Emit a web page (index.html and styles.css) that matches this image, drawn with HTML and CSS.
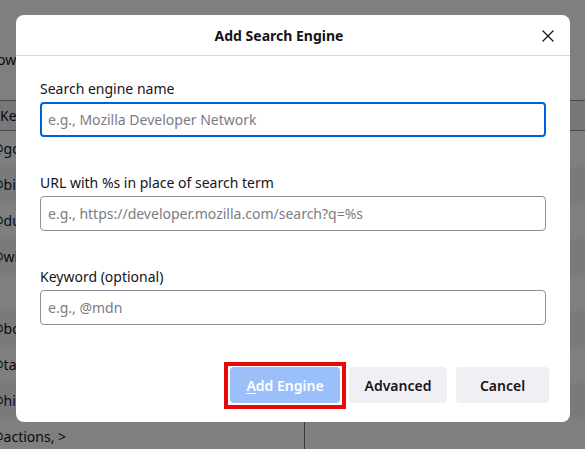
FILE: index.html
```html
<!DOCTYPE html>
<html>
<head>
<meta charset="utf-8">
<link rel="stylesheet" href="styles.css">
</head>
<body>
<div class="page">
  <div class="bg">
    <div class="bg-intro">ow</div>
    <div class="bg-table">
      <div class="bg-row bg-head"><span class="c1">Keyword</span><span class="c2">Name</span></div>
      <div class="bg-row"><span class="c1">@google</span><span class="c2"></span></div>
      <div class="bg-row alt"><span class="c1">@bing</span><span class="c2"></span></div>
      <div class="bg-row"><span class="c1">@duckduckgo</span><span class="c2"></span></div>
      <div class="bg-row alt"><span class="c1">@wikipedia</span><span class="c2"></span></div>
      <div class="bg-row"><span class="c1"></span><span class="c2"></span></div>
      <div class="bg-row alt"><span class="c1">@bookmarks, *</span><span class="c2"></span></div>
      <div class="bg-row"><span class="c1">@tabs, %</span><span class="c2"></span></div>
      <div class="bg-row alt"><span class="c1">@history, ^</span><span class="c2"></span></div>
      <div class="bg-row"><span class="c1">@actions, &gt;</span><span class="c2"></span></div>
    </div>
  </div>
  <div class="overlay"></div>
  <div class="dialog">
    <div class="header">
      <div class="title">Add Search Engine</div>
      <button class="close" aria-label="Close">
        <svg width="12" height="12" viewBox="0 0 12 12"><path d="M0.5 0.5 L11.5 11.5 M11.5 0.5 L0.5 11.5" stroke="#15141a" stroke-width="1.2" fill="none"/></svg>
      </button>
    </div>
    <div class="body">
      <div class="field">
        <label class="label">Search engine name</label>
        <input class="input focused" placeholder="e.g., Mozilla Developer Network">
      </div>
      <div class="field">
        <label class="label">URL with %s in place of search term</label>
        <input class="input" placeholder="e.g., https://developer.mozilla.com/search?q=%s">
      </div>
      <div class="field">
        <label class="label">Keyword (optional)</label>
        <input class="input" placeholder="e.g., @mdn">
      </div>
    </div>
    <div class="footer">
      <span class="ring"><button class="btn primary"><u>A</u>dd Engine</button></span>
      <button class="btn advanced">Advanced</button>
      <button class="btn cancel">Cancel</button>
    </div>
  </div>
</div>
</body>
</html>
```

FILE: styles.css
```css
html, body {
  margin: 0;
  padding: 0;
}
body {
  font-family: "Noto Sans", "Open Sans", sans-serif;
  color: #15141a;
  background: #fff;
}
.page {
  position: relative;
  width: 585px;
  height: 449px;
  overflow: hidden;
}
.bg {
  margin-left: -9px;
  padding-top: 50px;
  font-size: 14px;
}
.bg-intro {
  margin-left: 6px;
  height: 20px;
  line-height: 20px;
}
.bg-table {
  margin-top: 30px;
}
.bg-row {
  display: flex;
  height: 36px;
  line-height: 36px;
}
.bg-row.alt {
  background: #f4f4f6;
}
.bg-head {
  height: 29px;
  line-height: 29px;
  border-top: 1px solid #8f8f9d;
  border-bottom: 1px solid #8f8f9d;
  background: #f0f0f4;
}
.bg-head .c1 {
  padding-left: 9px;
}
.c1 {
  box-sizing: border-box;
  width: 313px;
  white-space: nowrap;
  overflow: hidden;
}
.c2 {
  flex: 1;
  border-left: 1px solid #757575;
}
.overlay {
  position: absolute;
  inset: 0;
  background: rgba(0, 0, 0, 0.5);
}
.dialog {
  position: absolute;
  left: 16px;
  top: 15px;
  width: 554px;
  height: 407px;
  background: #fff;
  border-radius: 8px;
  display: flex;
  flex-direction: column;
}
.header {
  height: 40px;
  display: flex;
  align-items: center;
  border-bottom: 1px solid #d7d7db;
}
.title {
  flex: 1;
  text-align: center;
  font-weight: 700;
  font-size: 14px;
}
.close {
  width: 12px;
  height: 12px;
  padding: 0;
  margin: 1px 16px 0 0;
  border: none;
  background: none;
  display: flex;
}
.body {
  padding: 23px 24px 0 24px;
  display: flex;
  flex-direction: column;
  gap: 36px;
}
.field {
  display: flex;
  flex-direction: column;
}
.label {
  font-size: 14px;
  line-height: 20px;
  margin-bottom: 3px;
}
.input {
  box-sizing: border-box;
  width: 506px;
  height: 35px;
  border: 1px solid #8f8f9d;
  border-radius: 4px;
  padding: 0 7px;
  font-family: inherit;
  font-size: 14px;
  color: #15141a;
  background: #fff;
  outline: none;
}
.input.focused {
  border: 2px solid #0061e0;
  padding: 0 6px;
}
.input::placeholder {
  color: #7c7c84;
}
.footer {
  margin-top: 37px;
  padding: 0 21px;
  display: flex;
  justify-content: flex-end;
  align-items: flex-start;
  gap: 9px;
}
.ring {
  display: flex;
  border: 4px solid #e50a0a;
  padding: 1px 2px 2px 2px;
  margin-right: -6px;
}
.btn {
  height: 36px;
  border: none;
  border-radius: 4px;
  background: #f0f0f4;
  color: #15141a;
  font-family: inherit;
  font-size: 14px;
  font-weight: 600;
  padding: 0;
  margin-top: 5px;
}
.btn.primary {
  width: 110px;
  margin-top: 0;
  background: #9bbff8;
  color: #fff;
}
.btn.primary u {
  text-underline-offset: 2px;
}
.btn.advanced {
  width: 98px;
}
.btn.cancel {
  width: 93px;
}
```
